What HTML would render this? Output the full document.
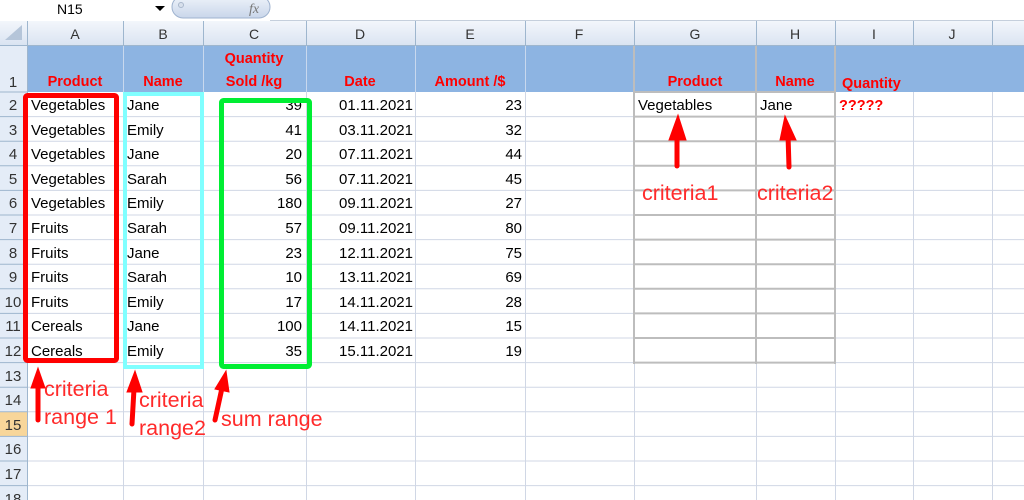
<!DOCTYPE html>
<html><head><meta charset="utf-8"><style>
html,body{margin:0;padding:0;background:#fff;width:1024px;height:500px;overflow:hidden}
svg{display:block;font-family:"Liberation Sans",sans-serif}
.d{font-size:15px;fill:#000}
.h{font-size:14.5px;font-weight:bold;fill:#ff0000}
.c{font-size:14px;fill:#333}
.a{font-size:21.5px;fill:#ff2a2a}
</style></head><body>
<svg width="1024" height="500" viewBox="0 0 1024 500">
<defs>
<linearGradient id="hg" x1="0" y1="0" x2="0" y2="1"><stop offset="0" stop-color="#f3f6fb"/><stop offset="1" stop-color="#dae4f2"/></linearGradient>
<linearGradient id="pg" x1="0" y1="0" x2="0" y2="1"><stop offset="0" stop-color="#eef3fa"/><stop offset="1" stop-color="#c9d6ea"/></linearGradient>
</defs>
<rect x="0" y="0" width="1024" height="21" fill="#fff"/>
<text x="57" y="14" class="c" style="font-size:14px;fill:#000">N15</text>
<path d="M155 6 L165 6 L160 11 Z" fill="#000"/>
<rect x="172" y="-4" width="98" height="22" rx="11" fill="url(#pg)" stroke="#9fb3cf"/>
<circle cx="181" cy="5" r="2.5" fill="#d8e0ec" stroke="#a9b7cb"/>
<text x="249" y="13" style="font-family:'Liberation Serif',serif;font-style:italic;font-size:14px;fill:#777">fx</text>
<line x1="270" y1="20.5" x2="1024" y2="20.5" stroke="#c5cfdc"/>
<rect x="0" y="21" width="1024" height="24" fill="url(#hg)"/>
<rect x="0" y="45" width="27" height="455" fill="#e4ecf7"/>
<rect x="0" y="411.8" width="27" height="24.6" fill="#f8d69a"/>
<path d="M5 40 L22 25 L22 40 Z" fill="#b5c5d9"/>
<rect x="27" y="45" width="997" height="47" fill="#8db4e2"/>
<g stroke="#d0d7e5" stroke-width="1">
<line x1="123.5" y1="92" x2="123.5" y2="500"/><line x1="203.5" y1="92" x2="203.5" y2="500"/>
<line x1="306.5" y1="92" x2="306.5" y2="500"/><line x1="415.5" y1="92" x2="415.5" y2="500"/>
<line x1="525.5" y1="92" x2="525.5" y2="500"/><line x1="634.5" y1="92" x2="634.5" y2="500"/>
<line x1="756.5" y1="92" x2="756.5" y2="500"/><line x1="835.5" y1="92" x2="835.5" y2="500"/>
<line x1="913.5" y1="92" x2="913.5" y2="500"/><line x1="992.5" y1="92" x2="992.5" y2="500"/>
<line x1="27" y1="116.6" x2="1024" y2="116.6"/><line x1="27" y1="141.2" x2="1024" y2="141.2"/>
<line x1="27" y1="165.8" x2="1024" y2="165.8"/><line x1="27" y1="190.4" x2="1024" y2="190.4"/>
<line x1="27" y1="215" x2="1024" y2="215"/><line x1="27" y1="239.6" x2="1024" y2="239.6"/>
<line x1="27" y1="264.2" x2="1024" y2="264.2"/><line x1="27" y1="288.8" x2="1024" y2="288.8"/>
<line x1="27" y1="313.4" x2="1024" y2="313.4"/><line x1="27" y1="338" x2="1024" y2="338"/>
<line x1="27" y1="362.6" x2="1024" y2="362.6"/><line x1="27" y1="387.2" x2="1024" y2="387.2"/>
<line x1="27" y1="411.8" x2="1024" y2="411.8"/><line x1="27" y1="436.4" x2="1024" y2="436.4"/>
<line x1="27" y1="461" x2="1024" y2="461"/><line x1="27" y1="485.6" x2="1024" y2="485.6"/>
</g>
<g stroke="#c8d8ee" stroke-width="1">
<line x1="123.5" y1="45" x2="123.5" y2="92"/><line x1="203.5" y1="45" x2="203.5" y2="92"/>
<line x1="306.5" y1="45" x2="306.5" y2="92"/><line x1="415.5" y1="45" x2="415.5" y2="92"/>
<line x1="525.5" y1="45" x2="525.5" y2="92"/><line x1="634.5" y1="45" x2="634.5" y2="92"/>
<line x1="756.5" y1="45" x2="756.5" y2="92"/><line x1="835.5" y1="45" x2="835.5" y2="92"/>
</g>
<g stroke="#bdbdbd" stroke-width="2" fill="none">
<path d="M634 45 V364 M756 45 V364 M835 45 V364"/>
<path d="M634 92 H835 M634 116.6 H835 M634 141.2 H835 M634 165.8 H835 M634 190.4 H835 M634 215 H835 M634 239.6 H835 M634 264.2 H835 M634 288.8 H835 M634 313.4 H835 M634 338 H835 M634 362.6 H835"/>
</g>
<g stroke="#9eb6ce" stroke-width="1">
<line x1="0" y1="45.5" x2="1024" y2="45.5"/>
<line x1="27.5" y1="21" x2="27.5" y2="500"/>
<line x1="123.5" y1="21" x2="123.5" y2="45"/><line x1="203.5" y1="21" x2="203.5" y2="45"/>
<line x1="306.5" y1="21" x2="306.5" y2="45"/><line x1="415.5" y1="21" x2="415.5" y2="45"/>
<line x1="525.5" y1="21" x2="525.5" y2="45"/><line x1="634.5" y1="21" x2="634.5" y2="45"/>
<line x1="756.5" y1="21" x2="756.5" y2="45"/><line x1="835.5" y1="21" x2="835.5" y2="45"/>
<line x1="913.5" y1="21" x2="913.5" y2="45"/><line x1="992.5" y1="21" x2="992.5" y2="45"/>
<line x1="0" y1="92" x2="27" y2="92"/><line x1="0" y1="116.6" x2="27" y2="116.6"/>
<line x1="0" y1="141.2" x2="27" y2="141.2"/><line x1="0" y1="165.8" x2="27" y2="165.8"/>
<line x1="0" y1="190.4" x2="27" y2="190.4"/><line x1="0" y1="215" x2="27" y2="215"/>
<line x1="0" y1="239.6" x2="27" y2="239.6"/><line x1="0" y1="264.2" x2="27" y2="264.2"/>
<line x1="0" y1="288.8" x2="27" y2="288.8"/><line x1="0" y1="313.4" x2="27" y2="313.4"/>
<line x1="0" y1="338" x2="27" y2="338"/><line x1="0" y1="362.6" x2="27" y2="362.6"/>
<line x1="0" y1="387.2" x2="27" y2="387.2"/><line x1="0" y1="411.8" x2="27" y2="411.8"/>
<line x1="0" y1="436.4" x2="27" y2="436.4"/><line x1="0" y1="461" x2="27" y2="461"/>
<line x1="0" y1="485.6" x2="27" y2="485.6"/>
</g>
<g class="c" text-anchor="middle" style="font-size:14px;fill:#333">
<text x="75" y="39">A</text><text x="163" y="39">B</text><text x="254" y="39">C</text>
<text x="360" y="39">D</text><text x="470" y="39">E</text><text x="579" y="39">F</text>
<text x="695" y="39">G</text><text x="795" y="39">H</text><text x="874" y="39">I</text>
<text x="952" y="39">J</text>
</g>
<g text-anchor="middle" style="font-size:15px;fill:#333">
<text x="13" y="87">1</text><text x="13" y="110">2</text><text x="13" y="135">3</text>
<text x="13" y="159">4</text><text x="13" y="184">5</text><text x="13" y="208">6</text>
<text x="13" y="233">7</text><text x="13" y="258">8</text><text x="13" y="282">9</text>
<text x="13" y="307">10</text><text x="13" y="331">11</text><text x="13" y="356">12</text>
<text x="13" y="381">13</text><text x="13" y="405">14</text><text x="13" y="430">15</text>
<text x="13" y="454">16</text><text x="13" y="479">17</text><text x="13" y="504">18</text>
</g>
<g class="h" text-anchor="middle">
<text x="75" y="86">Product</text><text x="163" y="86">Name</text>
<text x="254" y="63">Quantity</text><text x="254" y="86">Sold /kg</text>
<text x="360" y="86">Date</text><text x="470" y="86">Amount /$</text>
<text x="695" y="86">Product</text><text x="795" y="86">Name</text>
</g>
<text x="842" y="88" class="h">Quantity</text>
<text x="839" y="110" class="h">?????</text>
<g class="d">
<text x="31" y="110">Vegetables</text><text x="31" y="135">Vegetables</text><text x="31" y="159">Vegetables</text>
<text x="31" y="184">Vegetables</text><text x="31" y="208">Vegetables</text><text x="31" y="233">Fruits</text>
<text x="31" y="258">Fruits</text><text x="31" y="282">Fruits</text><text x="31" y="307">Fruits</text>
<text x="31" y="331">Cereals</text><text x="31" y="356">Cereals</text>
<text x="127" y="110">Jane</text><text x="127" y="135">Emily</text><text x="127" y="159">Jane</text>
<text x="127" y="184">Sarah</text><text x="127" y="208">Emily</text><text x="127" y="233">Sarah</text>
<text x="127" y="258">Jane</text><text x="127" y="282">Sarah</text><text x="127" y="307">Emily</text>
<text x="127" y="331">Jane</text><text x="127" y="356">Emily</text>
<text x="638" y="110">Vegetables</text><text x="760" y="110">Jane</text>
</g>
<g class="d" text-anchor="end">
<text x="302" y="110">39</text><text x="302" y="135">41</text><text x="302" y="159">20</text>
<text x="302" y="184">56</text><text x="302" y="208">180</text><text x="302" y="233">57</text>
<text x="302" y="258">23</text><text x="302" y="282">10</text><text x="302" y="307">17</text>
<text x="302" y="331">100</text><text x="302" y="356">35</text>
<text x="413" y="110">01.11.2021</text><text x="413" y="135">03.11.2021</text><text x="413" y="159">07.11.2021</text>
<text x="413" y="184">07.11.2021</text><text x="413" y="208">09.11.2021</text><text x="413" y="233">09.11.2021</text>
<text x="413" y="258">12.11.2021</text><text x="413" y="282">13.11.2021</text><text x="413" y="307">14.11.2021</text>
<text x="413" y="331">14.11.2021</text><text x="413" y="356">15.11.2021</text>
<text x="522" y="110">23</text><text x="522" y="135">32</text><text x="522" y="159">44</text>
<text x="522" y="184">45</text><text x="522" y="208">27</text><text x="522" y="233">80</text>
<text x="522" y="258">75</text><text x="522" y="282">69</text><text x="522" y="307">28</text>
<text x="522" y="331">15</text><text x="522" y="356">19</text>
</g>
<rect x="25.5" y="95.5" width="91" height="265" fill="none" stroke="#ff0000" stroke-width="5" rx="2"/>
<rect x="125" y="94" width="77" height="273" fill="none" stroke="#80ffff" stroke-width="4"/>
<rect x="221.5" y="100.5" width="88" height="266" fill="none" stroke="#00ee33" stroke-width="5" rx="2"/>
<g fill="#ff0000" stroke="#ff0000">
<line x1="38" y1="420" x2="38" y2="385" stroke-width="5" stroke-linecap="round"/>
<path d="M31 388 L38 368 L45 388 Z" stroke-width="1"/>
<line x1="132" y1="424" x2="134" y2="389" stroke-width="5" stroke-linecap="round"/>
<path d="M127 392 L135 371 L142 392 Z" stroke-width="1"/>
<line x1="215" y1="420" x2="222" y2="388" stroke-width="5" stroke-linecap="round"/>
<path d="M215 389 L226 371 L229 392 Z" stroke-width="1"/>
<line x1="677" y1="166" x2="677" y2="135" stroke-width="5" stroke-linecap="round"/>
<path d="M669 140 L678 115 L686 140 Z" stroke-width="1"/>
<line x1="789" y1="167" x2="788" y2="135" stroke-width="5" stroke-linecap="round"/>
<path d="M780 140 L785 116 L796 140 Z" stroke-width="1"/>
</g>
<g class="a">
<text x="44" y="396">criteria</text><text x="44" y="424">range 1</text>
<text x="139" y="407">criteria</text><text x="139" y="435">range2</text>
<text x="221" y="426">sum range</text>
<text x="642" y="200">criteria1</text><text x="757" y="200">criteria2</text>
</g>
</svg>
</body></html>
